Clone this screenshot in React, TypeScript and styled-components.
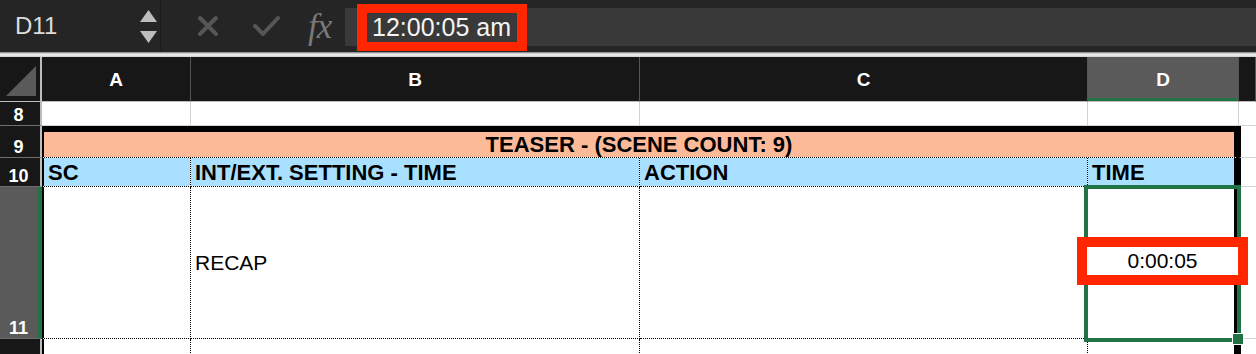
import React from "react";
import styled, { createGlobalStyle } from "styled-components";

const GlobalStyle = createGlobalStyle`
  html, body {
    margin: 0;
    height: 100%;
    overflow: hidden;
    background: #ffffff;
    font-family: "Liberation Sans", Arial, sans-serif;
  }
`;

const GREEN = "#217346";
const RED = "#ff2600";
const GRID = "#d4d4d4";

const TopBar = styled.div`
  display: flex;
  align-items: center;
  height: 52px;
  background: #252525;
`;

const NameBox = styled.div`
  display: flex;
  align-items: center;
  justify-content: space-between;
  box-sizing: border-box;
  width: 161px;
  height: 100%;
  padding: 0 3px 0 15px;
  border-right: 1px solid #1d1d1d;
  color: #dcdcdc;
  font-size: 24px;
`;

const Spinner = styled.div`
  display: flex;
  flex-direction: column;
  gap: 9px;
`;

const Actions = styled.div`
  display: flex;
  align-items: center;
  height: 100%;
  padding-left: 36px;
`;

const IconSlot = styled.div<{ width: number }>`
  display: flex;
  align-items: center;
  width: ${(p) => p.width}px;
`;

const Fx = styled.span`
  font-family: "Liberation Serif", "Times New Roman", serif;
  font-style: italic;
  font-size: 35px;
  color: #787878;
  letter-spacing: -1px;
  line-height: 1;
`;

const FormulaField = styled.div`
  flex: 1;
  display: flex;
  align-items: center;
  height: 38px;
  margin-top: 2px;
  padding-left: 12px;
  background: #393939;
`;

const FormulaValue = styled.div`
  display: flex;
  align-items: center;
  box-sizing: border-box;
  width: 170px;
  height: 47px;
  padding-left: 5px;
  border: 10px solid ${RED};
  border-top-width: 9px;
  border-bottom-width: 9px;
  background: #393939;
  color: #f4f4f4;
  font-size: 25px;
  white-space: nowrap;
`;

const Divider = styled.div`
  height: 5px;
  background: linear-gradient(#7c7c7c, #f2f2f2 45%, #cfcfcf);
`;

const Sheet = styled.div`
  display: grid;
  grid-template-columns: 42px 149px 449px 448px 151px 1fr;
  grid-template-rows: 45px 24px 32px 29px 152px 30px;
  background: #ffffff;
`;

const Corner = styled.div`
  display: flex;
  align-items: flex-end;
  padding: 0 0 5px 6px;
  background: #171717;
  border-right: 2px solid #bcbcbc;
  border-bottom: 1px solid #bcbcbc;
`;

const ColHead = styled.div<{ $active?: boolean }>`
  display: flex;
  align-items: center;
  justify-content: center;
  padding-top: 2px;
  background: ${(p) => (p.$active ? "#5a5a5a" : "#171717")};
  border-right: 1px solid #555555;
  border-bottom: 1px solid #bcbcbc;
  box-shadow: ${(p) => (p.$active ? `inset 0 -3px 0 ${GREEN}` : "none")};
  color: #ffffff;
  font-size: 19px;
  font-weight: bold;
`;

const RowHead = styled.div<{ $active?: boolean }>`
  display: flex;
  align-items: flex-end;
  justify-content: center;
  box-sizing: border-box;
  padding: 0 ${(p) => (p.$active ? "1px" : "3px")} 1px 0;
  background: ${(p) => (p.$active ? "#5a5a5a" : "#171717")};
  border-right: ${(p) => (p.$active ? `4px solid ${GREEN}` : "2px solid #bcbcbc")};
  border-bottom: 1px solid #6e6e6e;
  color: #ffffff;
  font-size: 18px;
  font-weight: bold;
  line-height: 1;
`;

const Cell = styled.div`
  border-right: 1px solid ${GRID};
  border-bottom: 1px solid ${GRID};
`;

const TitleCell = styled.div`
  grid-column: 2 / 6;
  display: flex;
  align-items: flex-end;
  justify-content: center;
  padding-bottom: 1px;
  background: #fdba98;
  background-clip: padding-box;
  border-top: 6px solid #000;
  border-left: 2px solid #000;
  border-right: 5px solid #000;
  border-bottom: 1px dotted #000;
  font-size: 22px;
  font-weight: bold;
  line-height: 1;
`;

const TableCell = styled.div<{ $bg?: string; $first?: boolean; $last?: boolean }>`
  position: relative;
  display: flex;
  align-items: center;
  box-sizing: border-box;
  padding-left: 4px;
  background: ${(p) => p.$bg || "#ffffff"};
  background-clip: padding-box;
  border-left: ${(p) => (p.$first ? "2px solid #000" : "none")};
  border-right: ${(p) => (p.$last ? "5px solid #000" : "1px dotted #000")};
  border-bottom: 1px dotted #000;
  font-size: 21px;
`;

const HeadCell = styled(TableCell)`
  align-items: flex-end;
  padding-bottom: 2px;
  font-size: 22px;
  font-weight: bold;
  line-height: 1;
`;

const EdgeCell = styled.div<{ $edge?: boolean }>`
  border-left: ${(p) => (p.$edge ? "2px solid #000" : "none")};
  border-bottom: 1px solid ${GRID};
`;

const Selection = styled.div`
  position: absolute;
  z-index: 2;
  top: -2px;
  left: -4px;
  right: -7px;
  bottom: -4px;
  border: 4px solid ${GREEN};
  pointer-events: none;
`;

const FillHandle = styled.div`
  position: absolute;
  z-index: 3;
  right: -9px;
  bottom: -6px;
  width: 10px;
  height: 10px;
  background: ${GREEN};
  box-shadow: 0 0 0 1px #ffffff;
`;

const CellHighlight = styled.div`
  position: absolute;
  z-index: 4;
  left: -11px;
  right: -14px;
  top: 50px;
  height: 48px;
  box-sizing: border-box;
  display: flex;
  align-items: center;
  justify-content: center;
  border: 10px solid ${RED};
  background: #ffffff;
  font-size: 21px;
`;

const Triangle = () => (
  <svg width="30" height="30" viewBox="0 0 30 30">
    <polygon points="30,0 30,30 0,30" fill="#5a5a5a" />
  </svg>
);

const SpinArrow = ({ up }: { up?: boolean }) => (
  <svg width="17" height="12" viewBox="0 0 17 12">
    <polygon points={up ? "8.5,0 17,12 0,12" : "0,0 17,0 8.5,12"} fill="#bdbdbd" />
  </svg>
);

const CancelIcon = () => (
  <svg width="22" height="22" viewBox="0 0 22 22">
    <path d="M3 3 L19 19 M19 3 L3 19" stroke="#565656" strokeWidth="4" strokeLinecap="round" />
  </svg>
);

const ConfirmIcon = () => (
  <svg width="29" height="22" viewBox="0 0 29 22">
    <path d="M3 11 L11 19 L26 3" stroke="#565656" strokeWidth="4" fill="none" strokeLinecap="round" strokeLinejoin="round" />
  </svg>
);

const columns = ["A", "B", "C", "D"];

export default function App() {
  return (
    <>
      <GlobalStyle />
      <TopBar>
        <NameBox>
          <span>D11</span>
          <Spinner>
            <SpinArrow up />
            <SpinArrow />
          </Spinner>
        </NameBox>
        <Actions>
          <IconSlot width={55}>
            <CancelIcon />
          </IconSlot>
          <IconSlot width={56}>
            <ConfirmIcon />
          </IconSlot>
          <IconSlot width={37}>
            <Fx>fx</Fx>
          </IconSlot>
        </Actions>
        <FormulaField>
          <FormulaValue>12:00:05 am</FormulaValue>
        </FormulaField>
      </TopBar>
      <Divider />
      <Sheet>
        <Corner>
          <Triangle />
        </Corner>
        {columns.map((c) => (
          <ColHead key={c} $active={c === "D"}>
            {c}
          </ColHead>
        ))}
        <ColHead />

        <RowHead>8</RowHead>
        <Cell />
        <Cell />
        <Cell />
        <Cell />
        <EdgeCell />

        <RowHead>9</RowHead>
        <TitleCell>TEASER - (SCENE COUNT: 9)</TitleCell>
        <EdgeCell $edge />

        <RowHead>10</RowHead>
        <HeadCell $bg="#a9dfff" $first>SC</HeadCell>
        <HeadCell $bg="#a9dfff">INT/EXT. SETTING - TIME</HeadCell>
        <HeadCell $bg="#a9dfff">ACTION</HeadCell>
        <HeadCell $bg="#a9dfff" $last>TIME</HeadCell>
        <EdgeCell $edge />

        <RowHead $active>11</RowHead>
        <TableCell $first />
        <TableCell>RECAP</TableCell>
        <TableCell />
        <TableCell $last>
          <Selection />
          <FillHandle />
          <CellHighlight>0:00:05</CellHighlight>
        </TableCell>
        <EdgeCell $edge />

        <RowHead />
        <TableCell $first />
        <TableCell />
        <TableCell />
        <TableCell $last />
        <EdgeCell $edge />
      </Sheet>
    </>
  );
}
